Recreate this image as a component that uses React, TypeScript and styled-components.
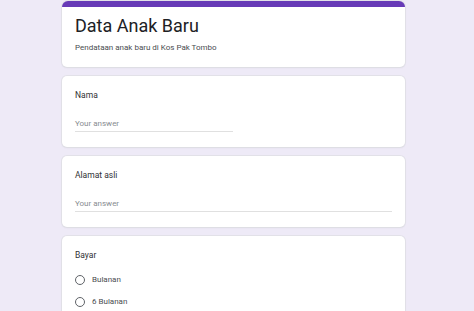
import React from "react";
import styled, { createGlobalStyle } from "styled-components";

const Global = createGlobalStyle`
  html, body {
    margin: 0;
    padding: 0;
    background: #eeeaf7;
    font-family: Roboto, "Liberation Sans", Arial, sans-serif;
  }
`;

const Page = styled.div`
  height: 311px;
  background: #eeeaf7;
  overflow: hidden;
`;

const Column = styled.div`
  display: flex;
  flex-direction: column;
  gap: 9px;
  width: 343px;
  margin: 1px 0 0 62px;
`;

const Card = styled.div`
  background: #ffffff;
  border-radius: 5px;
  box-shadow: 0 0 0 1px rgba(218, 220, 224, 0.6), 0 1px 2px rgba(60, 64, 67, 0.08);
  padding: 13px 13px 15px;
  display: flex;
  flex-direction: column;
`;

const HeaderCard = styled(Card)`
  border-top: 6px solid #673ab7;
  padding-top: 8px;
  padding-bottom: 13px;
  border-radius: 6px 6px 5px 5px;
`;

const Title = styled.h1`
  margin: 0;
  font-size: 18px;
  line-height: 22px;
  font-weight: 400;
  color: #202124;
`;

const Subtitle = styled.p`
  margin: 5px 0 0;
  font-size: 8px;
  line-height: 12px;
  color: #4a4d51;
`;

const Question = styled.div`
  font-size: 8.5px;
  line-height: 12px;
  color: #303134;
`;

const Answer = styled.div<{ $full?: boolean }>`
  margin-top: 17px;
  width: ${(p) => (p.$full ? "100%" : "158px")};
  font-size: 8px;
  line-height: 12px;
  color: #888c91;
  padding-bottom: 1px;
  border-bottom: 1px solid #e0e0e0;
`;

const Options = styled.div`
  display: flex;
  flex-direction: column;
  gap: 11px;
  margin-top: 13px;
`;

const Option = styled.label`
  display: flex;
  align-items: center;
  gap: 7px;
  font-size: 8px;
  line-height: 11px;
  color: #4a4d51;
`;

const Radio = styled.span`
  width: 8px;
  height: 8px;
  border-radius: 50%;
  border: 1.3px solid #5f6368;
  flex-shrink: 0;
`;

export default function App() {
  return (
    <Page>
      <Global />
      <Column>
        <HeaderCard>
          <Title>Data Anak Baru</Title>
          <Subtitle>Pendataan anak baru di Kos Pak Tombo</Subtitle>
        </HeaderCard>
        <Card>
          <Question>Nama</Question>
          <Answer>Your answer</Answer>
        </Card>
        <Card>
          <Question>Alamat asli</Question>
          <Answer $full>Your answer</Answer>
        </Card>
        <Card>
          <Question>Bayar</Question>
          <Options>
            <Option>
              <Radio />
              Bulanan
            </Option>
            <Option>
              <Radio />6 Bulanan
            </Option>
          </Options>
        </Card>
      </Column>
    </Page>
  );
}
